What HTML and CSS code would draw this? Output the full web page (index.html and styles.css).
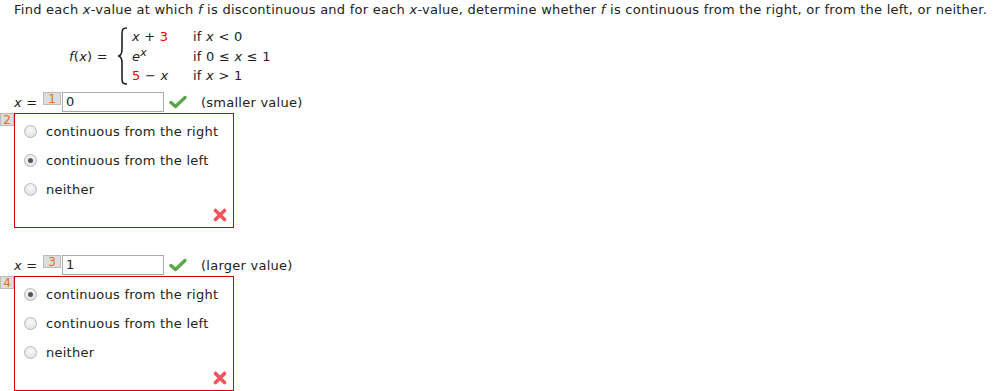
FILE: index.html
```html
<!DOCTYPE html>
<html>
<head>
<meta charset="utf-8">
<link rel="stylesheet" href="styles.css">
</head>
<body>
<div class="page">
  <p class="prompt">Find each <i>x</i>-value at which <i>f</i> is discontinuous and for each <i>x</i>-value, determine whether <i>f</i> is continuous from the right, or from the left, or neither.</p>
  <div class="formula">
    <div class="lhs"><i>f</i>(<i>x</i>) =</div>
    <svg class="brace" width="12" height="58" viewBox="0 0 12 58"><path d="M10 1 C5 1 5 3 5 8 L5 22 C5 27 4 29 1 29 C4 29 5 31 5 36 L5 50 C5 55 5 57 10 57" fill="none" stroke="#222" stroke-width="1.6"/></svg>
    <div class="cases">
      <div class="c1"><i>x</i> + <span class="red">3</span></div><div class="c2">if <i>x</i> &lt; 0</div>
      <div class="c1"><i>e</i><sup><i>x</i></sup></div><div class="c2">if 0 ≤ <i>x</i> ≤ 1</div>
      <div class="c1"><span class="red">5</span> − <i>x</i></div><div class="c2">if <i>x</i> &gt; 1</div>
    </div>
  </div>

  <div class="answer">
    <span class="xeq"><i>x</i> =</span>
    <span class="tag">1</span>
    <span class="input">0</span>
    <svg class="check" width="18" height="14" viewBox="0 0 18 14"><path d="M2 7.5 L6.5 11.5 L16 2.5" fill="none" stroke="#5aa64a" stroke-width="3.4" stroke-linejoin="round" stroke-linecap="round"/></svg>
    <span class="hint">(smaller value)</span>
  </div>
  <div class="choice">
    <span class="tag side">2</span>
    <div class="box">
      <div class="opt"><span class="radio"></span>continuous from the right</div>
      <div class="opt"><span class="radio on"></span>continuous from the left</div>
      <div class="opt"><span class="radio"></span>neither</div>
      <svg class="wrong" width="14" height="14" viewBox="0 0 14 14"><path d="M2.5 2.5 L11.5 11.5 M11.5 2.5 L2.5 11.5" stroke="#f0555d" stroke-width="3.6" stroke-linecap="round"/></svg>
    </div>
  </div>

  <div class="answer second">
    <span class="xeq"><i>x</i> =</span>
    <span class="tag">3</span>
    <span class="input">1</span>
    <svg class="check" width="18" height="14" viewBox="0 0 18 14"><path d="M2 7.5 L6.5 11.5 L16 2.5" fill="none" stroke="#5aa64a" stroke-width="3.4" stroke-linejoin="round" stroke-linecap="round"/></svg>
    <span class="hint">(larger value)</span>
  </div>
  <div class="choice">
    <span class="tag side">4</span>
    <div class="box">
      <div class="opt"><span class="radio on"></span>continuous from the right</div>
      <div class="opt"><span class="radio"></span>continuous from the left</div>
      <div class="opt"><span class="radio"></span>neither</div>
      <svg class="wrong" width="14" height="14" viewBox="0 0 14 14"><path d="M2.5 2.5 L11.5 11.5 M11.5 2.5 L2.5 11.5" stroke="#f0555d" stroke-width="3.6" stroke-linecap="round"/></svg>
    </div>
  </div>
</div>
</body>
</html>
```

FILE: styles.css
```css
html, body {
  margin: 0;
  padding: 0;
  background: #fff;
}
body {
  font-family: "DejaVu Sans", Verdana, sans-serif;
  font-size: 13px;
  letter-spacing: 0.25px;
  color: #222;
}
.page {
  padding-top: 2px;
}
.prompt {
  margin: 0 0 0 14px;
  line-height: 16px;
  white-space: nowrap;
}
.formula {
  display: flex;
  align-items: center;
  margin: 8px 0 0 69px;
  height: 60px;
}
.lhs {
  margin-right: 9px;
}
.brace {
  display: block;
  margin-right: 3px;
}
.cases {
  display: grid;
  grid-template-columns: 61px auto;
  grid-auto-rows: 19.5px;
  align-items: center;
}
.cases sup {
  font-size: 11px;
  vertical-align: 5px;
  line-height: 0;
}
.red {
  color: #e00;
}
.answer {
  display: flex;
  align-items: center;
  height: 20px;
  margin-top: 6px;
}
.answer.second {
  margin-top: 27px;
}
.xeq {
  margin-left: 14px;
  width: 29px;
}
.tag {
  box-sizing: border-box;
  display: inline-flex;
  align-items: center;
  justify-content: center;
  width: 18px;
  height: 13px;
  background: #ddd;
  border: 1px solid #bbb;
  color: #e07020;
  font-size: 12px;
  letter-spacing: 0;
  line-height: 1;
  align-self: flex-start;
}
.answer .tag {
  margin-right: 1px;
}
.input {
  box-sizing: border-box;
  width: 102px;
  height: 20px;
  border: 1px solid #aaa;
  padding-left: 3px;
  line-height: 18px;
}
.check {
  margin-left: 5px;
  margin-right: 14px;
}
.hint {
  color: #222;
}
.choice {
  display: flex;
  margin-top: 1px;
}
.tag.side {
  width: 14px;
  height: 13px;
}
.box {
  position: relative;
  box-sizing: border-box;
  width: 220px;
  height: 115px;
  border: 1px solid #d40000;
  padding-top: 3px;
}
.opt {
  display: flex;
  align-items: center;
  height: 29px;
  padding-left: 9px;
}
.radio {
  box-sizing: border-box;
  width: 13px;
  height: 13px;
  border-radius: 50%;
  border: 1px solid #b8b8b8;
  background: radial-gradient(circle at 50% 35%, #fafafa, #dcdcdc);
  margin-right: 9px;
  position: relative;
}
.radio.on::after {
  content: "";
  position: absolute;
  left: 3px;
  top: 3px;
  width: 5px;
  height: 5px;
  border-radius: 50%;
  background: #555;
}
.wrong {
  position: absolute;
  right: 6px;
  bottom: 5px;
}
```
